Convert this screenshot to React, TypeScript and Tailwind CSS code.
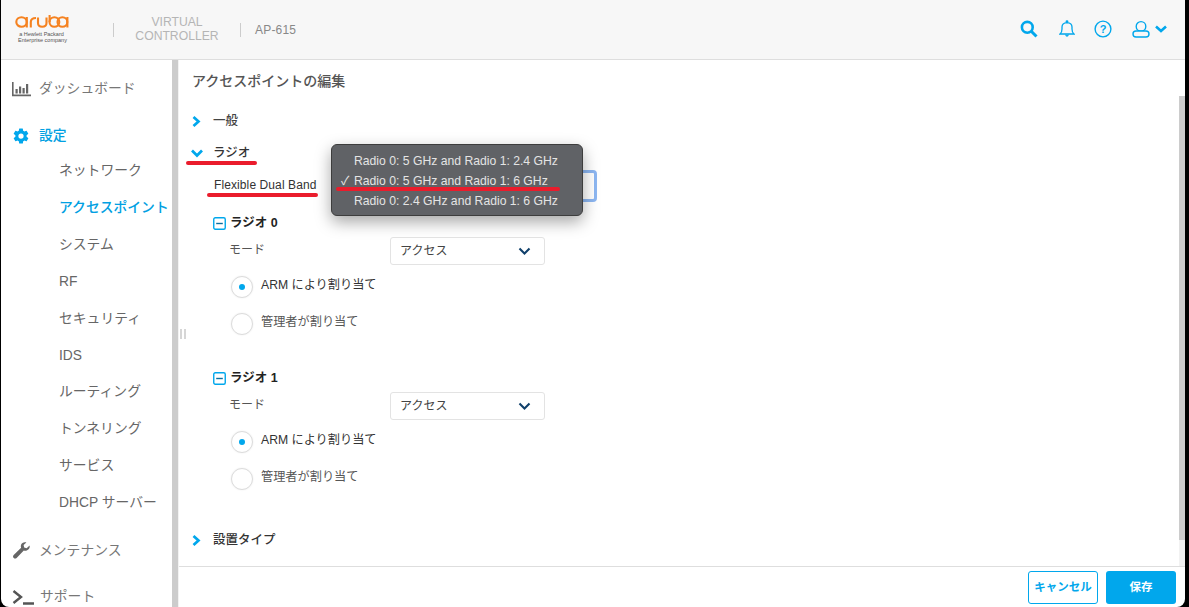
import React from "react";

const blue = "#01a7ec";

function ChevronRight() {
  return (
    <svg width="9" height="11" viewBox="0 0 9 11" className="shrink-0" fill="none" stroke={blue} strokeWidth="2.7">
      <path d="M1.5 1 L6.5 5.5 L1.5 10" />
    </svg>
  );
}

function ChevronDown() {
  return (
    <svg width="12" height="9" viewBox="0 0 12 9" className="shrink-0" fill="none" stroke={blue} strokeWidth="2.7">
      <path d="M1 1.5 L6 6.5 L11 1.5" />
    </svg>
  );
}

function Minus() {
  return (
    <svg width="13" height="13" viewBox="0 0 13 13" fill="none" className="shrink-0">
      <rect x="0.75" y="0.75" width="11.5" height="11.5" rx="1.5" stroke={blue} strokeWidth="1.4" />
      <path d="M3.2 6.5 H9.8" stroke="#0b6f9f" strokeWidth="1.4" />
    </svg>
  );
}

function Select() {
  return (
    <div className="w-[155px] h-[28px] border border-[#e3e3e3] rounded-[3px] bg-white flex items-center justify-between pl-[9px] pr-[13px] text-[12px] text-[#444]">
      <span>アクセス</span>
      <svg width="13" height="9" viewBox="0 0 13 9" fill="none" stroke="#10406b" strokeWidth="2.1">
        <path d="M1.5 1.5 L6.5 6.5 L11.5 1.5" />
      </svg>
    </div>
  );
}

function Radio({ on, label }: { on?: boolean; label: string }) {
  return (
    <div className="flex items-center h-[22px] ml-[1px]">
      <div className="w-[22px] h-[22px] rounded-full border border-[#dcdcdc] bg-white flex items-center justify-center shadow-[0_0_2px_rgba(0,0,0,0.08)]">
        {on && <div className="w-[6px] h-[6px] rounded-full bg-[#01a7ec]" />}
      </div>
      <span className={`ml-[8px] -mt-[3px] text-[12.2px] ${on ? "text-[#333]" : "text-[#555]"}`}>{label}</span>
    </div>
  );
}

function RadioGroup({ title }: { title: string }) {
  return (
    <div>
      <div className="flex items-center gap-[4px] h-[18px]">
        <Minus />
        <span className="text-[12.5px] font-bold text-[#222]">{title}</span>
      </div>
      <div className="flex items-center mt-[5px] h-[28px] pl-[16px]">
        <span className="w-[161px] text-[12px] text-[#555] -mt-[2px]">モード</span>
        <Select />
      </div>
      <div className="pl-[17px] mt-[11px] flex flex-col gap-[15px]">
        <Radio on label="ARM により割り当て" />
        <Radio label="管理者が割り当て" />
      </div>
    </div>
  );
}

function NavSub({ label, active }: { label: string; active?: boolean }) {
  return (
    <div className={`h-[36.9px] pl-[58px] flex items-center text-[13.8px] whitespace-nowrap ${active ? "text-[#01a0e2] font-medium" : "text-[#666]"}`}>
      {label}
    </div>
  );
}

export default function App() {
  return (
    <div
      className="relative w-[1189px] h-[607px] overflow-hidden bg-black"
      style={{ fontFamily: '"Liberation Sans", "Noto Sans CJK JP", sans-serif' }}
    >
      <div className="ml-[1px] w-[1184px] h-[607px] bg-white flex flex-col rounded-bl-[8px] rounded-br-[8px] overflow-hidden">
        {/* Header */}
        <header className="h-[60px] shrink-0 bg-[#f7f7f7] border-b border-[#dedede] flex items-center">
          <div className="w-[112px] pl-[14px] flex flex-col items-start shrink-0 -mt-[1px]">
            <svg width="54" height="13" viewBox="0 0 54 13" fill="none" stroke="#f58220" strokeWidth="2.1">
              <ellipse cx="6.5" cy="7" rx="5.2" ry="4.8" />
              <path d="M11.8 2 V12.5" />
              <path d="M15.8 12.5 V7 Q15.8 3 21 3" />
              <path d="M23 2.5 V8 Q23 11.7 27.2 11.7 Q31.5 11.7 31.5 8 V2.5" />
              <path d="M34.6 0 V7" />
              <ellipse cx="39.4" cy="7" rx="4.9" ry="4.8" />
              <ellipse cx="47.4" cy="7" rx="4.9" ry="4.8" />
              <path d="M52.4 2 V12.5" />
            </svg>
            <div className="text-[5.5px] leading-[6px] text-[#555] text-center mt-[3px] ml-[3px] w-[47px] whitespace-nowrap">
              a Hewlett Packard
              <br />
              Enterprise company
            </div>
          </div>
          <div className="w-px h-[14px] bg-[#ccc]" />
          <div className="w-[126px] text-center text-[12.2px] leading-[14px] text-[#b5b5b5] -mt-[1px]">
            VIRTUAL
            <br />
            CONTROLLER
          </div>
          <div className="w-px h-[14px] bg-[#ccc]" />
          <div className="ml-[14px] text-[12px] text-[#888] tracking-[0.2px]">AP-615</div>
          <div className="ml-auto flex items-center pr-[8px] -mt-[1px]">
            <svg width="18" height="18" viewBox="0 0 18 18" fill="none" stroke={blue} className="mr-[21px]">
              <circle cx="7.3" cy="7.3" r="5.4" strokeWidth="2.6" />
              <path d="M11.5 11.5 L16.5 16.5" strokeWidth="3" />
            </svg>
            <svg width="16" height="18" viewBox="0 0 16 18" fill="none" stroke={blue} strokeWidth="1.3" className="mr-[19px]">
              <path d="M1 14 Q3 12.5 3 9 V7 Q3 3 8 2.6 Q13 3 13 7 V9 Q13 12.5 15 14 Z" />
              <path d="M6.6 14.6 Q8 17.6 9.4 14.6" />
              <circle cx="8" cy="1.6" r="0.8" />
            </svg>
            <svg width="18" height="18" viewBox="0 0 18 18" fill="none" className="mr-[20px]">
              <circle cx="9" cy="9" r="7.9" stroke={blue} strokeWidth="1.4" />
              <text x="9" y="13" textAnchor="middle" fontSize="11" fontWeight="700" fill={blue}>?</text>
            </svg>
            <svg width="18" height="18" viewBox="0 0 18 18" fill="none" stroke={blue} strokeWidth="1.4">
              <circle cx="9" cy="6.4" r="4.8" />
              <rect x="1" y="11" width="16" height="6" rx="3" fill="#f7f7f7" />
            </svg>
            <svg width="12" height="8" viewBox="0 0 12 8" fill="none" stroke={blue} strokeWidth="2.6" className="ml-[5px] mr-[10px]">
              <path d="M1 1.5 L6 6 L11 1.5" />
            </svg>
          </div>
        </header>

        <div className="flex-1 flex min-h-0">
          {/* Sidebar */}
          <aside className="w-[171px] shrink-0 overflow-hidden pt-[9px]">
            <div className="h-[40px] flex items-center pl-[11px]">
              <svg width="19" height="16" viewBox="0 0 19 16" className="shrink-0" fill="#666">
                <path d="M0 1 H1.6 V13.6 H19 V15.2 H0 Z" />
                <rect x="3.5" y="8" width="2.2" height="4.5" />
                <rect x="7" y="5.5" width="2.2" height="7" />
                <rect x="10.5" y="7" width="2.2" height="5.5" />
                <rect x="14" y="3" width="2.2" height="9.5" />
              </svg>
              <span className="ml-[8px] text-[13.8px] text-[#777]">ダッシュボード</span>
            </div>
            <div className="h-[40px] mt-[7px] flex items-center pl-[11px]">
              <svg width="18" height="18" viewBox="0 0 24 24" className="shrink-0" fill={blue}>
                <path d="M19.4 13c.04-.33.1-.66.1-1s-.06-.67-.1-1l2.1-1.6a.5.5 0 0 0 .12-.64l-2-3.46a.5.5 0 0 0-.6-.22l-2.5 1a7.3 7.3 0 0 0-1.7-1l-.38-2.65A.5.5 0 0 0 14 2h-4a.5.5 0 0 0-.5.42l-.37 2.65a7.7 7.7 0 0 0-1.7 1l-2.5-1a.5.5 0 0 0-.6.22l-2 3.46a.5.5 0 0 0 .12.64L4.57 11c-.04.33-.07.67-.07 1s.03.67.07 1l-2.11 1.65a.5.5 0 0 0-.12.64l2 3.46c.12.22.39.3.6.22l2.5-1c.52.4 1.08.73 1.7 1l.37 2.65c.04.24.25.42.5.42h4c.25 0 .46-.18.5-.42l.37-2.65a7.3 7.3 0 0 0 1.7-1l2.5 1c.22.08.49 0 .6-.22l2-3.46a.5.5 0 0 0-.12-.64L19.4 13ZM12 15.5a3.5 3.5 0 1 1 0-7 3.5 3.5 0 0 1 0 7Z" />
              </svg>
              <span className="ml-[9px] text-[13.8px] font-medium text-[#01a0e2]">設定</span>
            </div>
            <div className="mt-[-3px]">
              <NavSub label="ネットワーク" />
              <NavSub label="アクセスポイント" active />
              <NavSub label="システム" />
              <NavSub label="RF" />
              <NavSub label="セキュリティ" />
              <NavSub label="IDS" />
              <NavSub label="ルーティング" />
              <NavSub label="トンネリング" />
              <NavSub label="サービス" />
              <NavSub label="DHCP サーバー" />
            </div>
            <div className="h-[40px] mt-[9px] flex items-center pl-[12px]">
              <svg width="17" height="17" viewBox="0 0 17 17" className="shrink-0" fill="#666">
                <path d="M16.6 3.6 13.6 6.2 11.2 5.4 10.6 3 13.4.5C11.3-.3 8.7.7 8 3c-.3 1-.2 2 .1 2.8L.7 13c-.9.9-.9 2.2 0 3 .8.8 2.1.8 2.9 0l7.2-7.4c2.8 1 6.6-1.4 5.8-5Z" />
              </svg>
              <span className="ml-[9px] text-[13.8px] text-[#777]">メンテナンス</span>
            </div>
            <div className="h-[30px] mt-[12px] flex items-center pl-[11px]">
              <svg width="24" height="16" viewBox="0 0 24 16" className="shrink-0 -mt-[1px]" fill="none" stroke="#555" strokeWidth="2.4">
                <path d="M1.5 2 L9 8 L1.5 14" />
                <path d="M11 14.5 H22" strokeWidth="2.6" />
              </svg>
              <span className="ml-[4px] -mt-[2px] text-[13.8px] leading-[18px] text-[#777]">サポート</span>
            </div>
          </aside>

          {/* Splitter */}
          <div className="w-[6px] shrink-0 bg-[#cccccc]" />
          <div className="w-[1px] shrink-0 bg-[#f2f2f2]" />

          {/* Main */}
          <main className="flex-1 min-w-0 flex flex-col">
            <div className="flex-1 min-h-0 flex">
              <div className="flex-1 min-w-0 pl-[13px] relative">
                <div className="absolute left-[1px] top-[269px] flex gap-[2px]">
                  <div className="w-[2px] h-[10px] bg-[#d6d6d6]" />
                  <div className="w-[2px] h-[10px] bg-[#d6d6d6]" />
                </div>
                <h1 className="h-[42px] flex items-center text-[14px] font-medium text-[#555]">アクセスポイントの編集</h1>
                <div className="flex items-center h-[18px] mt-[10px]">
                  <ChevronRight />
                  <span className="ml-[12px] text-[12.5px] font-medium text-[#444]">一般</span>
                </div>
                <div className="flex items-center h-[18px] mt-[14px] -ml-[1px]">
                  <ChevronDown />
                  <span className="ml-[10px] text-[12.5px] font-medium text-[#333]">ラジオ</span>
                </div>
                <div className="pl-[22px] mt-[13px] h-[22px] flex items-center text-[12px] text-[#333] tracking-[0.1px]">
                  <span className="-mt-[2px]">Flexible Dual Band</span>
                </div>
                <div className="pl-[21px] mt-[17px] flex flex-col gap-[34px]">
                  <RadioGroup title="ラジオ 0" />
                  <RadioGroup title="ラジオ 1" />
                </div>
                <div className="flex items-center h-[18px] mt-[41px]">
                  <ChevronRight />
                  <span className="ml-[12px] text-[12.5px] font-medium text-[#333]">設置タイプ</span>
                </div>
              </div>
              <div className="w-[6px] shrink-0 bg-[#f2f2f2] flex flex-col">
                <div className="h-[36px] bg-white" />
                <div className="h-[444px] bg-[#cccccc]" />
              </div>
            </div>
            <footer className="h-[41px] shrink-0 border-t border-[#dedede] flex items-start justify-end gap-[8px] pr-[9px] pt-[4px]">
              <button className="w-[70px] h-[33px] rounded-[3px] border border-[#01a7ec] text-[#01a7ec] text-[11.5px] font-bold bg-white">キャンセル</button>
              <button className="w-[70px] h-[33px] rounded-[3px] bg-[#01a7ec] text-white text-[11.5px] font-bold">保存</button>
            </footer>
          </main>
        </div>
      </div>

      {/* Focused native select behind the popup */}
      <div className="absolute left-[500px] top-[170px] w-[97px] h-[32px] rounded-[4px] border-[3px] border-[#8db7f2] bg-white" />

      {/* Popup menu */}
      <div className="absolute left-[331px] top-[144px] w-[252px] h-[72px] rounded-[6px] bg-[#606266] border border-[#3d3d3d] shadow-[0_6px_16px_rgba(0,0,0,0.35)] text-[12.2px] leading-[20px] text-[#e4e4e4] pl-[22px] pt-[6px] whitespace-nowrap">
        <div>Radio 0: 5 GHz and Radio 1: 2.4 GHz</div>
        <div className="relative">
          <span className="absolute -left-[13px] top-0">✓</span>
          Radio 0: 5 GHz and Radio 1: 6 GHz
        </div>
        <div>Radio 0: 2.4 GHz and Radio 1: 6 GHz</div>
      </div>

      {/* Red hand-drawn annotations */}
      <div className="absolute left-[186px] top-[161px] w-[71px] h-[4px] rounded-full bg-[#ea1c2c]" />
      <div className="absolute left-[207px] top-[193px] w-[111px] h-[4px] rounded-full bg-[#ea1c2c]" />
      <div className="absolute left-[336px] top-[187px] w-[224px] h-[4px] rounded-full bg-[#ea1c2c]" />
    </div>
  );
}
